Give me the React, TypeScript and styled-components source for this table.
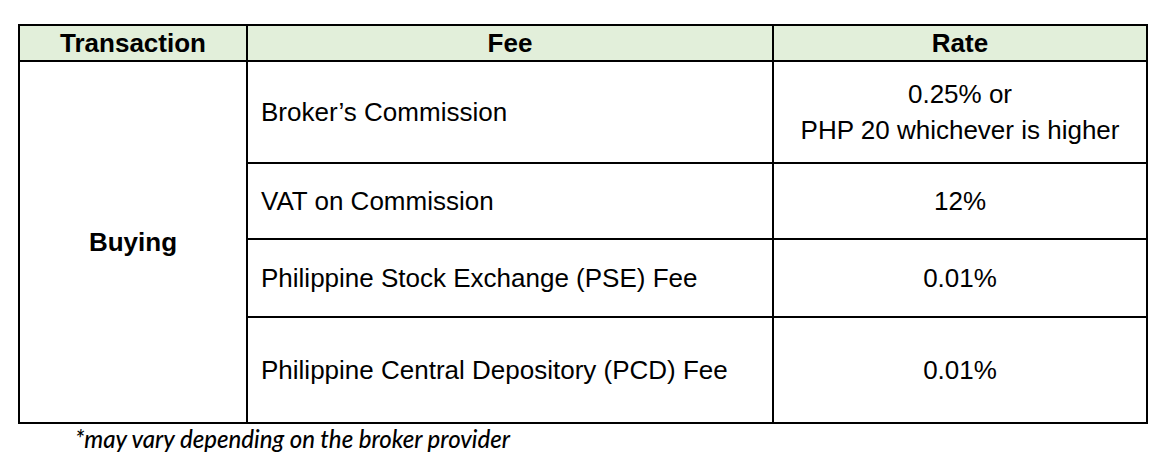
import React from "react";
import styled, { createGlobalStyle } from "styled-components";

const GlobalStyle = createGlobalStyle`
  html, body {
    margin: 0;
    padding: 0;
    background: #ffffff;
  }
  body {
    font-family: "Liberation Sans", Arial, Helvetica, sans-serif;
    color: #000000;
  }
`;

const fees = [
  { name: "Broker’s Commission", rate: ["0.25% or", "PHP 20 whichever is higher"], height: 102 },
  { name: "VAT on Commission", rate: ["12%"], height: 76 },
  { name: "Philippine Stock Exchange (PSE) Fee", rate: ["0.01%"], height: 78 },
  { name: "Philippine Central Depository (PCD) Fee", rate: ["0.01%"], height: 106 },
];

const App: React.FC = () => {
  return (
    <Page>
      <GlobalStyle />
      <FeeTable>
        <colgroup>
          <col style={{ width: 228 }} />
          <col style={{ width: 526 }} />
          <col style={{ width: 374 }} />
        </colgroup>
        <thead>
          <HeadRow>
            <HeadCell>Transaction</HeadCell>
            <HeadCell>Fee</HeadCell>
            <HeadCell>Rate</HeadCell>
          </HeadRow>
        </thead>
        <tbody>
          {fees.map((fee, i) => (
            <BodyRow key={fee.name} $height={fee.height}>
              {i === 0 && <TypeCell rowSpan={fees.length}>Buying</TypeCell>}
              <FeeCell>{fee.name}</FeeCell>
              <RateCell>
                {fee.rate.map((line) => (
                  <div key={line}>{line}</div>
                ))}
              </RateCell>
            </BodyRow>
          ))}
        </tbody>
      </FeeTable>
      <Note>*may vary depending on the broker provider</Note>
    </Page>
  );
};

const Page = styled.div`
  padding: 24px 0 0 18px;
`;

const FeeTable = styled.table`
  width: 1130px;
  table-layout: fixed;
  border-collapse: separate;
  border-spacing: 0;
  border-left: 2px solid #000;
  border-top: 2px solid #000;
  font-size: 26px;

  th,
  td {
    border-right: 2px solid #000;
    border-bottom: 2px solid #000;
    padding: 0;
    box-sizing: border-box;
  }
`;

const HeadRow = styled.tr`
  height: 36px;
  background: #e2efda;
`;

const HeadCell = styled.th`
  font-weight: bold;
  text-align: center;
  vertical-align: middle;
  line-height: 30px;
`;

const BodyRow = styled.tr<{ $height: number }>`
  height: ${(p) => p.$height}px;
`;

const TypeCell = styled.td`
  font-weight: bold;
  text-align: center;
  vertical-align: middle;
`;

const FeeCell = styled.td`
  padding-left: 13px !important;
  vertical-align: middle;
  line-height: 36px;
`;

const RateCell = styled.td`
  text-align: center;
  vertical-align: middle;
  line-height: 36px;
`;

const Note = styled.div`
  margin: 0 0 0 57px;
  font-family: Lato, "Open Sans", sans-serif;
  font-style: italic;
  font-weight: 500;
  font-size: 24px;
  line-height: 30px;
`;

export default App;
